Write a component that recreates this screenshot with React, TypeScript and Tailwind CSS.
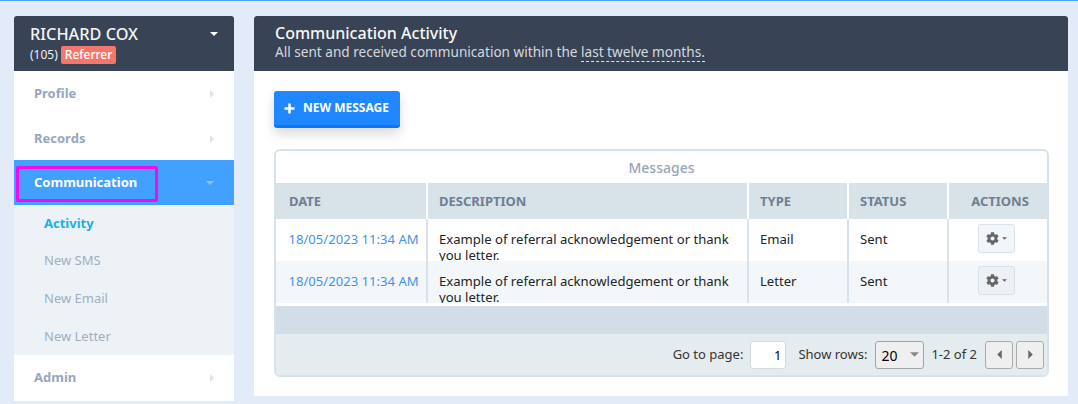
import { FaCog } from "react-icons/fa";

const Caret = ({ dir, className }: { dir: "right" | "down" | "left"; className: string }) => {
  const pts = dir === "down" ? "0,0 8,0 4,4" : dir === "right" ? "0,0 4,4 0,8" : "4,0 0,4 4,8";
  const w = dir === "down" ? 8 : 4;
  const h = dir === "down" ? 4 : 8;
  return (
    <svg width={w} height={h} viewBox={`0 0 ${w} ${h}`} className={className}>
      <polygon points={pts} fill="currentColor" />
    </svg>
  );
};

const NavItem = ({ label, className }: { label: string; className: string }) => (
  <div className={`bg-white pl-5 pr-5 flex items-center justify-between ${className}`}>
    <span className="text-[13px] font-bold text-[#98a6bc]">{label}</span>
    <Caret dir="right" className="text-[#dfe4ea]" />
  </div>
);

const Row = ({ type, alt }: { type: string; alt?: boolean }) => (
  <div className={`flex h-[42px] overflow-hidden text-[13.1px] text-[#212529] ${alt ? "bg-[#f3f7fa]" : "bg-white"}`}>
    <div className="w-[152px] pl-[12.5px] pt-[11px] text-[#3f94f0] border-r-2 border-[#d8e2ea] whitespace-nowrap">18/05/2023 11:34 AM</div>
    <div className="w-[321px] pl-[11px] pt-[12px] leading-[16px] border-r-2 border-[#d8e2ea]">
      <div className="w-[297px]">Example of referral acknowledgement or thank you letter.</div>
    </div>
    <div className="w-[100px] pl-[11px] pt-[11px] border-r-2 border-[#d8e2ea]">{type}</div>
    <div className="w-[100px] pl-[11px] pt-[11px] border-r-2 border-[#d8e2ea]">Sent</div>
    <div className="flex-1 flex justify-center pt-[5px] pr-[4px]">
      <div className={`w-[37px] h-[29px] rounded-[3px] border border-[#d8e2ea] flex items-center justify-center gap-[3px] ${alt ? "bg-[#edf1f5]" : "bg-[#f3f6f9]"}`}>
        <FaCog size={13} className="text-[#666]" />
        <Caret dir="down" className="text-[#666] w-[5px] h-[3px]" />
      </div>
    </div>
  </div>
);

const Head = ({ label, className }: { label: string; className: string }) => (
  <div className={`text-[13px] font-bold pt-[2px] text-[#6f7f92] flex items-center ${className}`}>{label}</div>
);

export default function App() {
  return (
    <div
      className="relative h-[404px] w-[1078px] overflow-hidden bg-[#e4ebf8] border-t border-[#4da3ff] flex items-start gap-5 pl-[14px] pt-[15px]"
      style={{ fontFamily: '"Noto Sans", sans-serif' }}
    >
      {/* sidebar */}
      <div className="w-[220px] shrink-0">
        <div className="h-[55px] bg-[#394356] rounded-t-[3px] pl-4 pr-4 pt-[6px] text-white">
          <div className="flex items-center justify-between">
            <span className="text-[16.3px] leading-[24px] font-medium text-[#f4f5f7]">RICHARD COX</span>
            <Caret dir="down" className="text-white" />
          </div>
          <div className="flex items-center gap-[3px] text-[12px] leading-[18px] text-[#f0f1f3]">
            <span>(105)</span>
            <span className="bg-[#f4776b] rounded-[2px] px-[4px] font-medium text-white">Referrer</span>
          </div>
        </div>
        <NavItem label="Profile" className="h-[45px]" />
        <NavItem label="Records" className="h-[44px] pt-[1px]" />
        <div className="h-[45px] bg-[#42a0ff] pl-5 pr-5 flex items-center justify-between">
          <span className="text-[13px] font-bold text-white">Communication</span>
          <Caret dir="down" className="text-[#8cc4fb]" />
        </div>
        <div className="h-[150px] bg-[#edf2f7] pl-[30px] text-[13px] text-[#a0aec0]">
          <div className="h-[37px] flex items-center font-bold text-[#19b0e6]">Activity</div>
          <div className="h-[38px] flex items-center">New SMS</div>
          <div className="h-[38px] flex items-center">New Email</div>
          <div className="h-[37px] flex items-center">New Letter</div>
        </div>
        <NavItem label="Admin" className="h-[46px] pb-[1px]" />
      </div>

      {/* main */}
      <div className="w-[814px] h-[380px] bg-white shrink-0">
        <div className="h-[55px] bg-[#394356] rounded-t-[3px] pl-[21px] pt-[7px]">
          <div className="text-[16px] leading-[20px] font-medium text-[#f7f8f9]">Communication Activity</div>
          <div className="text-[13.6px] leading-[17px] text-[#d5d9df]">
            All sent and received communication within the{" "}
            <span className="border-b border-dashed border-[#e2e5e9]">last twelve months.</span>
          </div>
        </div>
        <div className="pt-5 pl-5 pr-[19px]">
          <button className="h-[37px] w-[126px] rounded-[3px] bg-[#1f87ff] border-b-[3px] border-[#0a78f5] shadow-[0_6px_12px_rgba(0,0,0,0.15)] flex items-center pl-[10px] gap-[8px] text-[12px] font-bold text-white">
            <svg width="11" height="11" viewBox="0 0 11 11">
              <path d="M5.5 0.5v10M0.5 5.5h10" stroke="#fff" strokeWidth="2.5" />
            </svg>
            NEW MESSAGE
          </button>
          <div className="mt-[21px] h-[228px] w-[775px] rounded-[6px] border-2 border-[#d8e2ea] overflow-hidden bg-white">
            <div className="h-[32px] flex items-center justify-center text-[14px] font-medium text-[#98a6bc]">Messages</div>
            <div className="flex h-[36px] bg-[#d8e2e9]">
              <Head label="DATE" className="w-[152px] pl-[13px] border-r-2 border-white" />
              <Head label="DESCRIPTION" className="w-[321px] pl-[11px] border-r-2 border-white" />
              <Head label="TYPE" className="w-[100px] pl-[11px] border-r-2 border-white" />
              <Head label="STATUS" className="w-[100px] pl-[11px] border-r-2 border-white" />
              <Head label="ACTIONS" className="flex-1 justify-center pl-[4px]" />
            </div>
            <Row type="Email" />
            <Row type="Letter" alt />
            <div className="h-[3px] bg-white" />
            <div className="h-[28px] bg-[#d3dde8]" />
            <div className="h-[41px] bg-[#e5ecf0] flex items-center justify-end gap-[6px] pr-[3px] text-[13px] text-[#333]">
              <span>Go to page:</span>
              <div className="w-[36px] h-[28px] ml-[1px] mr-[6px] bg-white border border-[#d5d9dc] rounded-[3px] flex items-center justify-end pr-[4px] pt-[2px] text-black">1</div>
              <span>Show rows:</span>
              <div className="w-[49px] h-[28px] ml-[2px] bg-[#efefef] border border-[#a3a3a3] rounded-[3px] flex items-center justify-between pl-[5px] pr-[4px] text-[14px] text-black">
                <span className="pt-[2px]">20</span>
                <Caret dir="down" className="text-[#888] w-[9px] h-[5px]" />
              </div>
              <span className="ml-[1px] mr-[2px]">1-2 of 2</span>
              <div className="w-[28px] h-[28px] bg-[#efefef] border border-[#aaa] rounded-[3px] flex items-center justify-center">
                <Caret dir="left" className="text-[#666] w-[5px] h-[9px]" />
              </div>
              <div className="w-[28px] h-[28px] -ml-[3px] bg-[#efefef] border border-[#aaa] rounded-[3px] flex items-center justify-center">
                <Caret dir="right" className="text-[#666] w-[5px] h-[9px]" />
              </div>
            </div>
          </div>
        </div>
      </div>

      {/* annotation drawn over the menu */}
      <div className="absolute left-[16px] top-[165px] w-[142px] h-[36px] border-[3px] border-[#f608f0] rounded-[2px]" />
    </div>
  );
}
